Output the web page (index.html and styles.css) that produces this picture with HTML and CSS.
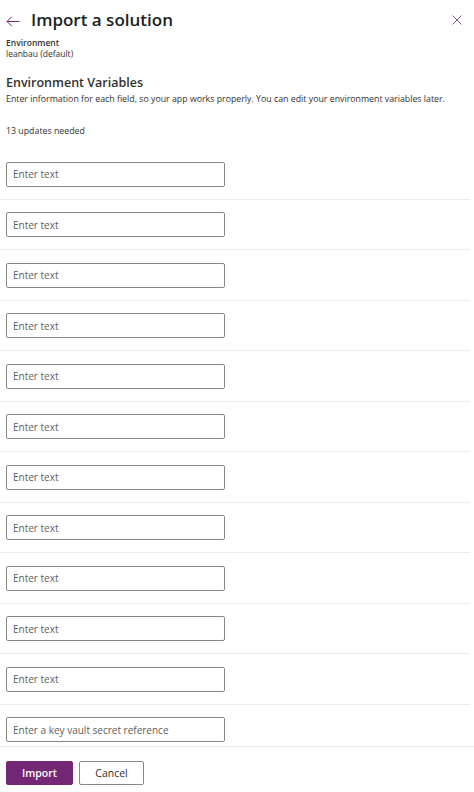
FILE: index.html
```html
<!DOCTYPE html>
<html lang="en">
<head>
<meta charset="utf-8">
<title>Import a solution</title>
<link rel="stylesheet" href="styles.css">
</head>
<body>
<div class="panel">
  <header class="header">
    <button class="back" aria-label="Back">
      <svg width="14" height="11" viewBox="0 0 14 11"><path d="M13.5 5.5H1M5.8 0.7L1 5.5l4.8 4.8" fill="none" stroke="#742774" stroke-width="1"/></svg>
    </button>
    <h1 class="title">Import a solution</h1>
    <button class="close" aria-label="Close">
      <svg width="10" height="10" viewBox="0 0 10 10"><path d="M0.5 0.5l9 9M9.5 0.5l-9 9" fill="none" stroke="#7a5a7e" stroke-width="1"/></svg>
    </button>
  </header>
  <div class="env">
    <div class="env-label">Environment</div>
    <div class="env-value">leanbau (default)</div>
  </div>
  <h2 class="section-title">Environment Variables</h2>
  <p class="desc">Enter information for each field, so your app works properly. You can edit your environment variables later.</p>
  <p class="count">13 updates needed</p>
  <div class="list">
    <div class="row"><input class="field" type="text" placeholder="Enter text"></div>
    <div class="row"><input class="field" type="text" placeholder="Enter text"></div>
    <div class="row"><input class="field" type="text" placeholder="Enter text"></div>
    <div class="row"><input class="field" type="text" placeholder="Enter text"></div>
    <div class="row"><input class="field" type="text" placeholder="Enter text"></div>
    <div class="row"><input class="field" type="text" placeholder="Enter text"></div>
    <div class="row"><input class="field" type="text" placeholder="Enter text"></div>
    <div class="row"><input class="field" type="text" placeholder="Enter text"></div>
    <div class="row"><input class="field" type="text" placeholder="Enter text"></div>
    <div class="row"><input class="field" type="text" placeholder="Enter text"></div>
    <div class="row"><input class="field" type="text" placeholder="Enter text"></div>
    <div class="row last"><input class="field" type="text" placeholder="Enter a key vault secret reference"></div>
  </div>
  <footer class="footer">
    <button class="btn primary">Import</button>
    <button class="btn secondary">Cancel</button>
  </footer>
</div>
</body>
</html>
```
FILE: styles.css
```css
html, body {
  margin: 0;
  padding: 0;
  background: #ffffff;
}
body {
  font-family: "Open Sans", "Noto Sans", sans-serif;
  color: #323130;
}
.panel {
  width: 474px;
  height: 792px;
  display: flex;
  flex-direction: column;
  overflow: hidden;
}
.header {
  display: flex;
  align-items: center;
  padding: 8px 12px 0 6px;
  height: 24px;
}
.back, .close {
  border: 0;
  background: none;
  padding: 0;
  display: flex;
  align-items: center;
  cursor: pointer;
}
.back { margin-right: 11px; margin-top: 2px; }
.close { margin-left: auto; margin-top: 0px; }
.title {
  margin: 0;
  font-size: 17px;
  line-height: 24px;
  font-weight: 600;
  color: #201f1e;
}
.env {
  padding: 5px 0 0 6px;
}
.env-label {
  font-size: 8.5px;
  line-height: 11px;
  font-weight: 600;
  color: #323130;
}
.env-value {
  font-size: 8.5px;
  line-height: 11px;
  color: #323130;
}
.section-title {
  margin: 15px 0 0 6px;
  font-size: 12.5px;
  line-height: 17px;
  font-weight: 600;
  color: #323130;
}
.desc {
  margin: 2px 0 0 6px;
  font-size: 8.8px;
  line-height: 12px;
  color: #323130;
}
.count {
  margin: 20px 0 0 6px;
  font-size: 8.8px;
  line-height: 12px;
  color: #323130;
}
.list {
  margin-top: 12px;
  display: flex;
  flex-direction: column;
}
.row {
  padding: 12.5px 0 12px 6px;
  margin-right: 4px;
  border-bottom: 1px solid #edebe9;
}
.row.last {
  border-bottom: 0;
  padding-bottom: 3.5px;
}
.field {
  display: block;
  box-sizing: border-box;
  width: 219px;
  height: 25px;
  margin: 0;
  border: 1px solid #8a8886;
  border-radius: 2px;
  padding: 0 6px;
  font-family: inherit;
  font-size: 10px;
  color: #323130;
  background: #fff;
  outline: none;
}
.field::placeholder {
  color: #605e5c;
}
.footer {
  border-top: 1px solid #edebe9;
  padding: 14px 0 0 6px;
  display: flex;
  gap: 6px;
}
.btn {
  box-sizing: border-box;
  height: 24px;
  font-family: inherit;
  font-size: 10.5px;
  border-radius: 2px;
  padding: 0;
  cursor: pointer;
}
.primary {
  width: 67px;
  background: #742774;
  border: 1px solid #742774;
  color: #ffffff;
  font-weight: 600;
}
.secondary {
  width: 65px;
  background: #ffffff;
  border: 1px solid #8a8886;
  color: #323130;
}
```
